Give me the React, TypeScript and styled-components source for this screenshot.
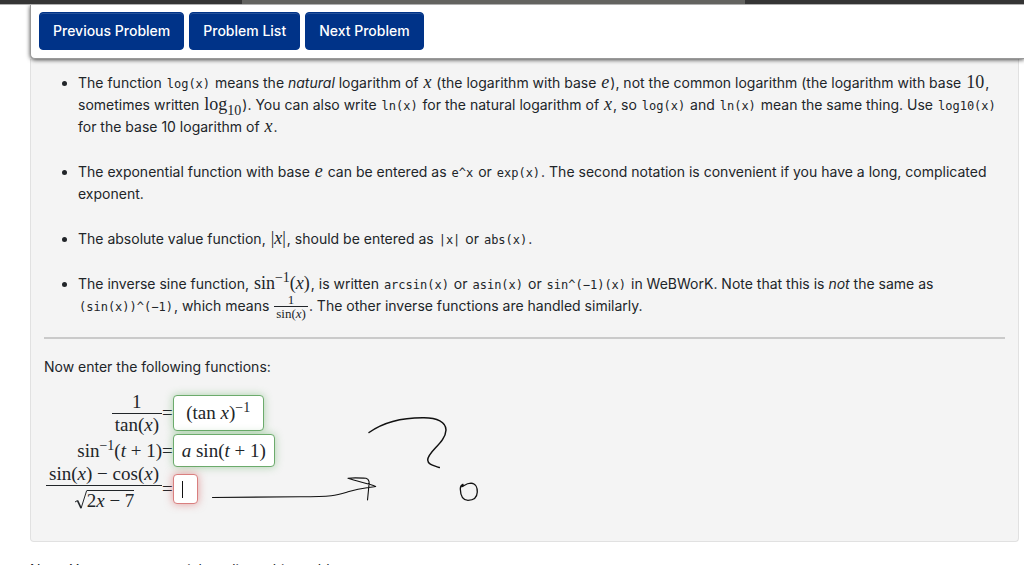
import React from "react";
import styled, { createGlobalStyle } from "styled-components";

const GlobalStyle = createGlobalStyle`
  * { box-sizing: border-box; }
  html { overflow: hidden; }
  body {
    margin: 0;
    background: #fff;
    color: #212529;
    font: 14px/22px Inter, "Liberation Sans", sans-serif;
  }
`;

const TopStrip = styled.div`
  display: flex;
  height: 5px;
  border-bottom: 1px solid #b0b0b0;
`;

const StripPart = styled.div<{ $grow: number; $active?: boolean }>`
  flex: ${(p) => p.$grow} 1 0;
  background: ${(p) => (p.$active ? "#636360" : "#353535")};
`;

const Page = styled.main`
  padding-left: 30px;
`;

const NavPanel = styled.nav`
  position: relative;
  z-index: 1;
  display: flex;
  gap: 5px;
  padding: 7px 8px 8px;
  border: solid #999;
  border-width: 0 0 1px 1px;
  border-bottom-left-radius: 5px;
  background: #fff;
  box-shadow: 0 1px 4px rgba(0, 0, 0, 0.7);
  clip-path: inset(0 0 -8px -8px);
`;

const NavButton = styled.button`
  height: 38px;
  padding: 0 13px;
  border: 1px solid #003388;
  border-radius: 4px;
  background: #003388;
  box-shadow: inset 0 1px 0 rgba(255, 255, 255, 0.15);
  color: #fff;
  font: inherit;
  font-weight: 500;
  white-space: nowrap;
`;

const ProblemPanel = styled.section`
  position: relative;
  margin-right: 5px;
  padding: 13px 13px 31px;
  border: 1px solid #e1e1e1;
  border-top: 0;
  border-radius: 0 0 4px 4px;
  background: #f4f4f4;
`;

const RuleList = styled.ul`
  display: flex;
  flex-direction: column;
  gap: 23px;
  margin: 0;
  padding: 0 0 0 34px;
`;

const Rule = styled.li``;

const Code = styled.code`
  margin: 0 1px;
  font-family: "DejaVu Sans Mono", monospace;
  font-size: 12px;
  line-height: 1;
`;

const MathText = styled.span`
  font-family: "Liberation Serif", serif;
  font-size: 19px;
  line-height: 22px;
  white-space: nowrap;

  sup, sub {
    font-size: 14px;
    line-height: 0;
  }
`;

const InlineMath = styled(MathText)`
  margin: 0 1px;
  font-size: 18px;
  line-height: 1;
`;

const Fraction = styled.span`
  display: inline-flex;
  flex-direction: column;
  align-items: center;
`;

const Numerator = styled.span`
  padding: 0 3px;
`;

const Denominator = styled.span`
  align-self: stretch;
  padding: 0 3px;
  border-top: 1px solid #212529;
  text-align: center;
`;

const SmallFraction = styled(Fraction)`
  margin: -6px 0;
  font-size: 13px;
  line-height: 13px;
  vertical-align: middle;

  ${Denominator} {
    padding: 0 2px;
  }
`;

const Divider = styled.hr`
  height: 2px;
  margin: 20px 0 17px;
  border: 0;
  background: #cacaca;
`;

const Prompt = styled.p`
  margin: 0 0 15px;
`;

const Equations = styled.div`
  display: grid;
  grid-template-columns: 118px max-content max-content;
  grid-template-rows: 40px 35px 42px;
  align-items: center;
`;

const LeftSide = styled(MathText)`
  justify-self: end;
`;

const Equals = styled(MathText)``;

const Radical = styled.span`
  display: inline-flex;
  margin-top: 4px;
`;

const RadicalSign = styled.svg`
  width: 13px;
  height: 20px;
`;

const Radicand = styled.span`
  border-top: 1px solid #212529;
  line-height: 19px;
`;

const AnswerBox = styled.label<{ $state: "correct" | "wrong"; $height: number }>`
  position: relative;
  justify-self: start;
  display: flex;
  align-items: center;
  justify-content: center;
  min-width: ${(p) => (p.$state === "correct" ? 91 : 25)}px;
  height: ${(p) => p.$height}px;
  padding: 0 8px;
  border: 1px solid ${(p) => (p.$state === "correct" ? "#6cab6c" : "#d97f7f")};
  border-radius: 4px;
  background: #fff;
  box-shadow: 0 0 8px
    ${(p) => (p.$state === "correct" ? "rgba(81, 163, 81, 0.45)" : "rgba(210, 70, 70, 0.5)")};
`;

const AnswerInput = styled.input`
  position: absolute;
  inset: 0;
  width: 100%;
  height: 100%;
  padding: 0;
  border: 0;
  outline: 0;
  background: transparent;
  color: transparent;
  caret-color: transparent;
`;

const Caret = styled.span`
  width: 1px;
  height: 17px;
  margin-right: 6px;
  background: #111;
`;

const Ink = styled.svg`
  position: absolute;
  left: 169px;
  top: 341px;
  width: 290px;
  height: 110px;
  pointer-events: none;
`;

const Note = styled.p`
  margin: 0;
  padding: 17px 0 8px;
`;

const X = () => <i>x</i>;

export default function App() {
  return (
    <>
      <GlobalStyle />
      <TopStrip>
        <StripPart $grow={242} />
        <StripPart $grow={503} $active />
        <StripPart $grow={279} />
      </TopStrip>
      <Page>
        <NavPanel>
          <NavButton type="button">Previous Problem</NavButton>
          <NavButton type="button">Problem List</NavButton>
          <NavButton type="button">Next Problem</NavButton>
        </NavPanel>
        <ProblemPanel>
          <RuleList>
            <Rule>
              The function <Code>log(x)</Code> means the <i>natural</i> logarithm of{" "}
              <InlineMath><X /></InlineMath> (the logarithm with base <InlineMath><i>e</i></InlineMath>),
              not the common logarithm (the logarithm with base <InlineMath>10</InlineMath>, sometimes
              written <InlineMath>log<sub>10</sub></InlineMath>). You can also write{" "}
              <Code>ln(x)</Code> for the natural logarithm of <InlineMath><X /></InlineMath>, so{" "}
              <Code>log(x)</Code> and <Code>ln(x)</Code> mean the same thing. Use{" "}
              <Code>log10(x)</Code> for the base 10 logarithm of <InlineMath><X /></InlineMath>.
            </Rule>
            <Rule>
              The exponential function with base <InlineMath><i>e</i></InlineMath> can be entered
              as <Code>e^x</Code> or <Code>exp(x)</Code>. The second notation is convenient if you
              have a long, complicated exponent.
            </Rule>
            <Rule>
              The absolute value function, <InlineMath>|<X />|</InlineMath>, should be entered
              as <Code>|x|</Code> or <Code>abs(x)</Code>.
            </Rule>
            <Rule>
              The inverse sine function,{" "}
              <InlineMath>sin<sup>−1</sup>(<X />)</InlineMath>, is written{" "}
              <Code>arcsin(x)</Code> or <Code>asin(x)</Code> or <Code>sin^(−1)(x)</Code> in
              WeBWorK. Note that this is <i>not</i> the same as <Code>(sin(x))^(−1)</Code>, which
              means{" "}
              <InlineMath>
                <SmallFraction>
                  <span>1</span>
                  <Denominator>sin(<X />)</Denominator>
                </SmallFraction>
              </InlineMath>
              . The other inverse functions are handled similarly.
            </Rule>
          </RuleList>
          <Divider />
          <Prompt>Now enter the following functions:</Prompt>
          <Equations>
            <LeftSide>
              <Fraction>
                <Numerator>1</Numerator>
                <Denominator>tan(<X />)</Denominator>
              </Fraction>
            </LeftSide>
            <Equals>=</Equals>
            <AnswerBox $state="correct" $height={36}>
              <MathText>(tan <X />)<sup>−1</sup></MathText>
              <AnswerInput type="text" aria-label="Answer 1" />
            </AnswerBox>

            <LeftSide>sin<sup>−1</sup>(<i>t</i> + 1)</LeftSide>
            <Equals>=</Equals>
            <AnswerBox $state="correct" $height={33}>
              <MathText><i>a</i> sin(<i>t</i> + 1)</MathText>
              <AnswerInput type="text" aria-label="Answer 2" />
            </AnswerBox>

            <LeftSide>
              <Fraction>
                <Numerator>sin(<X />) − cos(<X />)</Numerator>
                <Denominator>
                  <Radical>
                    <RadicalSign viewBox="0 0 13 20" fill="none" stroke="#212529">
                      <path d="M1 12 L3.5 10.5" strokeWidth="1" />
                      <path d="M3.5 10.5 L7 18" strokeWidth="1.7" />
                      <path d="M7 18.5 L12.7 .5" strokeWidth="1" />
                    </RadicalSign>
                    <Radicand>2<X /> − 7</Radicand>
                  </Radical>
                </Denominator>
              </Fraction>
            </LeftSide>
            <Equals>=</Equals>
            <AnswerBox $state="wrong" $height={30}>
              <Caret />
              <AnswerInput type="text" aria-label="Answer 3" />
            </AnswerBox>
          </Equations>
          <Ink
            viewBox="0 0 290 110"
            fill="none"
            stroke="#111"
            strokeLinecap="round"
            strokeLinejoin="round"
            aria-hidden="true"
          >
            <path
              d="M12.500 97.500 L100 96.800 C134 96.800 136 95.500 149 91.500 C161 88 167 88 175.700 86.500 C168 83.500 157 81.500 148 78.300 C154 77.500 160 78 166 78.300 C171 80 168.500 85 168.500 90 L167.500 100"
              strokeWidth="1.100"
            />
            <path
              d="M169 32.500 C185 21 203 17.500 224 17.700 C237 17.800 246 22 246 30 C245.500 43 228 51 227.700 60 C228 65 234 65.500 239.300 67.500"
              strokeWidth="1.500"
            />
            <path
              d="M261 87 C261.500 85.500 262.500 84.500 263 84.300 L262.500 86.500 C265 85 267 83.200 271 83.200 C276 83.500 277.500 88 277.300 92 C277 98 274 100.300 268 100.300 C262 100.300 260.500 95 260.300 89 C260.300 86.500 261 85 262.500 84.500"
              strokeWidth="1.300"
            />
          </Ink>
        </ProblemPanel>
        <Note>Note: You can earn partial credit on this problem.</Note>
      </Page>
    </>
  );
}
